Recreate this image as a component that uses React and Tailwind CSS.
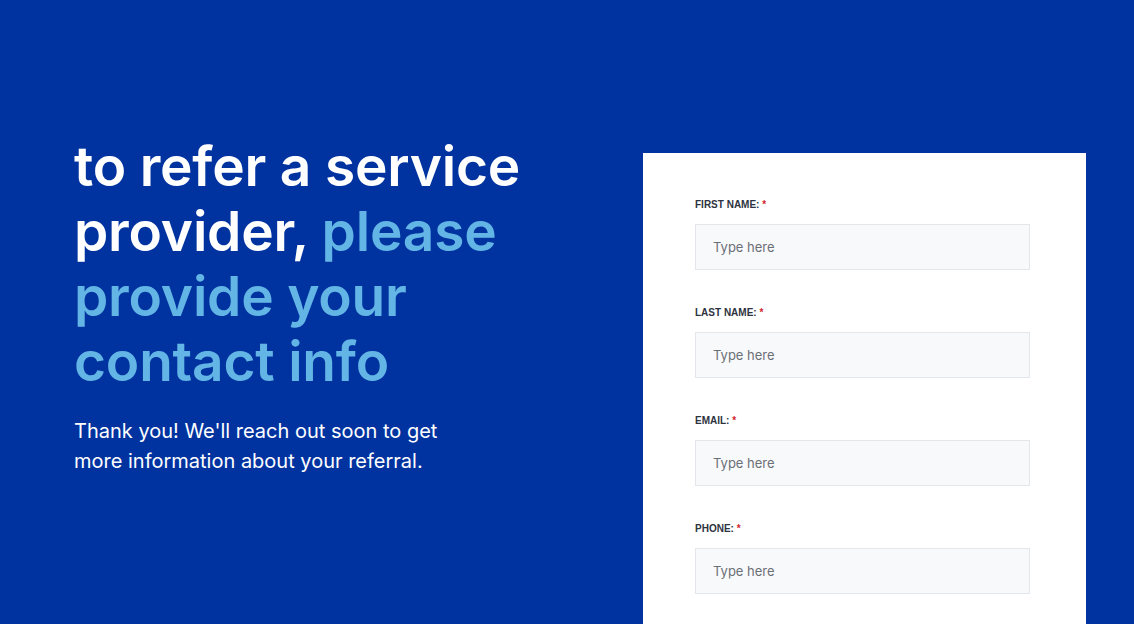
import React from 'react';

const fields = ['First Name:', 'Last Name:', 'Email:', 'Phone:'];

export default function App() {
  return (
    <div className="w-[1134px] h-[624px] overflow-hidden bg-[#0033a0] flex" style={{ fontFamily: 'Inter, sans-serif' }}>
      <div className="w-[643px] shrink-0 pl-[74px] pt-[134px]">
        <h1 className="w-[480px] text-[55px] leading-[65px] font-semibold text-white tracking-[-0.2px]">
          to refer a service provider, <span className="text-[#62b5e5]">please provide your contact info</span>
        </h1>
        <p className="mt-[22px] w-[390px] text-[20px] leading-[30px] text-white">
          Thank you! We'll reach out soon to get more information about your referral.
        </p>
      </div>

      <div className="mt-[153px] w-[443px] bg-white pl-[52px] pt-[46px] flex flex-col gap-[37px]">
        {fields.map((f) => (
          <div key={f} className="flex flex-col gap-[13px]">
            <label className="text-[10px] leading-[12px] font-bold uppercase text-[#2d3340]" style={{ fontFamily: '"Liberation Sans", Arial, sans-serif' }}>
              {f} <span className="text-[#d0252f]">*</span>
            </label>
            <div className="w-[335px] h-[46px] bg-[#f8f9fb] border border-[#e3e6ea] flex items-center px-[17px] pt-[2px] text-[13px] text-[#6b6f76]">
              Type here
            </div>
          </div>
        ))}
      </div>
    </div>
  );
}
